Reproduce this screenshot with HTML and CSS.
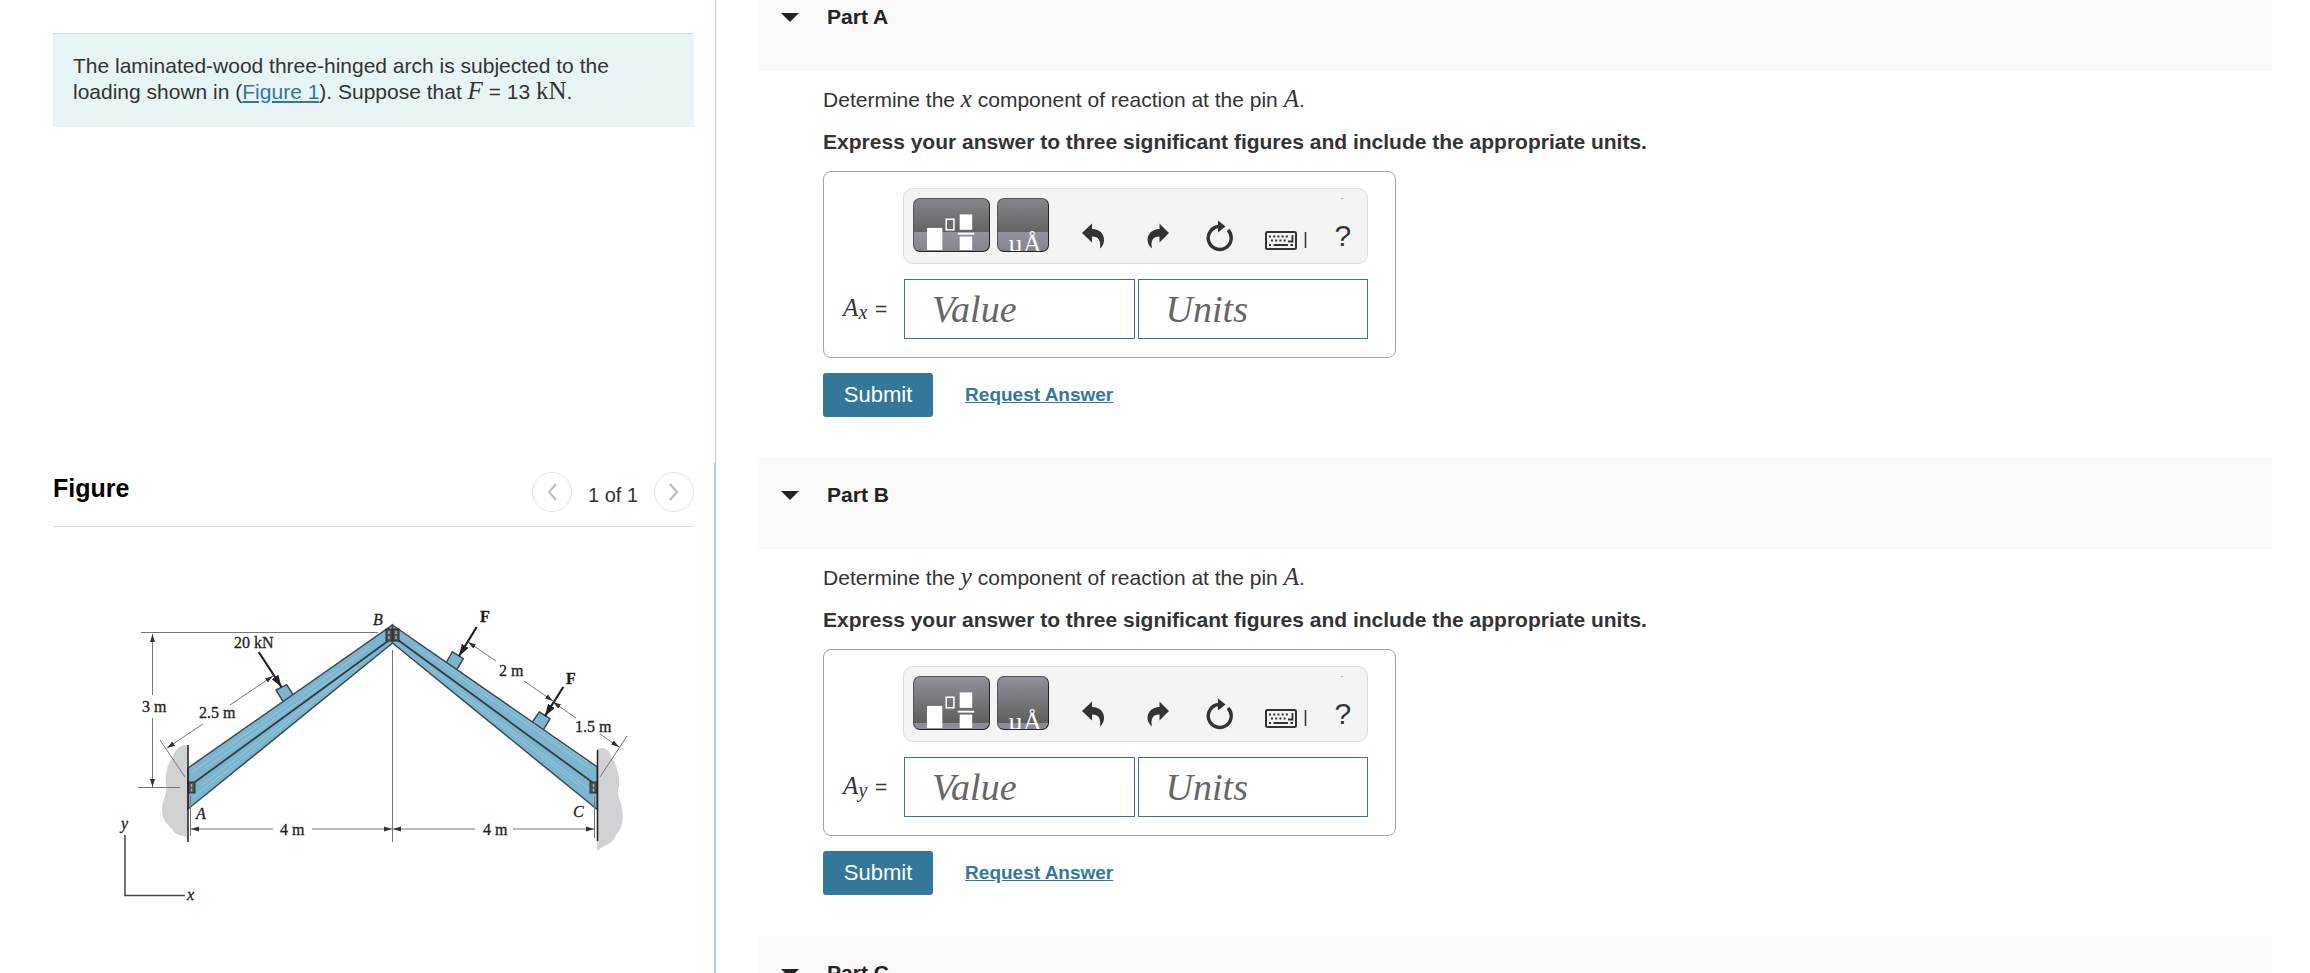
FILE: index.html
```html
<!DOCTYPE html>
<html lang="en">
<head>
    <meta charset="UTF-8">
    <meta name="viewport" content="width=device-width, initial-scale=1.0">
    <title>Three-Hinged Arch</title>
    <link rel="stylesheet" href="styles.css">
</head>
<body>
    <!-- shared toolbar icons -->
    <svg class="icon-defs" aria-hidden="true">
        <symbol id="icon-templates" viewBox="0 0 77 54">
            <g fill="#fff">
                <rect x="13" y="30" width="16" height="23"/>
                <rect x="47" y="16" width="13" height="16"/>
                <rect x="45" y="35" width="17" height="2"/>
                <rect x="47" y="39" width="13" height="14"/>
            </g>
            <rect x="33" y="21" width="8" height="11" fill="none" stroke="#fff" stroke-width="1.6"/>
        </symbol>
        <symbol id="icon-undo" viewBox="0 0 64 54">
            <path d="M22 35 L32 25.500 V31 C40 31 44 36 44 42 C44 45 43 48 40 50.500 C41 43 39 38.500 32 38.500 V44.500 Z" fill="#333"/>
        </symbol>
        <symbol id="icon-redo" viewBox="0 0 64 54">
            <path d="M45 35 L35.500 25.500 V31 C28 31 23.500 36 23.500 42 C23.500 45 25 48 28 50.500 C26.500 43 28.500 38.500 35.500 38.500 V44.500 Z" fill="#333"/>
        </symbol>
        <symbol id="icon-reset" viewBox="0 0 64 54">
            <path d="M40 32 A11.500 11.500 0 1 1 31 28.500" fill="none" stroke="#333" stroke-width="3.400"/>
            <path d="M30 22.500 L37.500 28.500 L30 34.500 Z" fill="#333"/>
        </symbol>
        <symbol id="icon-keyboard" viewBox="2 0 64 54">
            <rect x="16" y="34" width="30" height="17" rx="1.500" fill="none" stroke="#333" stroke-width="2"/>
            <path d="M19 38.500 H39 M21 42.500 H37" stroke="#333" stroke-width="2" stroke-dasharray="2 2.200"/>
            <path d="M42.500 37 V43.500 H38" fill="none" stroke="#333" stroke-width="1.800"/>
            <path d="M19 47 h2 M23.500 47 h14.500 M40.500 47 h2.500" stroke="#333" stroke-width="2"/>
            <path d="M55.500 34 V50" stroke="#333" stroke-width="1.500"/>
        </symbol>
    </svg>

    <div class="page">
        <aside class="sidebar">
            <section class="problem-pane">
                <div class="problem-text">
                    The laminated-wood three-hinged arch is subjected to the loading shown in (<a href="#figure">Figure 1</a>). Suppose that <i class="math">F</i> = 13 <span class="math">kN</span>.
                </div>
            </section>

            <section class="figure-pane" id="figure">
                <div class="figure-header">
                    <h2>Figure</h2>
                    <div class="pager">
                        <button type="button" class="pager-btn" aria-label="Previous figure">
                            <svg width="14" height="20" viewBox="0 0 14 20"><path d="M11 2 L4 10 L11 18" fill="none" stroke="#bbb" stroke-width="2"/></svg>
                        </button>
                        <span class="pager-count">1 of 1</span>
                        <button type="button" class="pager-btn" aria-label="Next figure">
                            <svg width="14" height="20" viewBox="0 0 14 20"><path d="M3 2 L10 10 L3 18" fill="none" stroke="#bbb" stroke-width="2"/></svg>
                        </button>
                    </div>
                </div>

                <svg class="diagram" viewBox="100 590 550 330" role="img" aria-label="Three-hinged arch ABC">
                    <defs>
                        <marker id="dim" viewBox="0 0 8 6" refX="8" refY="3" markerWidth="8" markerHeight="6" markerUnits="userSpaceOnUse" orient="auto-start-reverse">
                            <path d="M0 0.500 L8 3 L0 5.500 Z" fill="#333"/>
                        </marker>
                        <marker id="force" viewBox="0 0 12 8" refX="12" refY="4" markerWidth="12" markerHeight="8" markerUnits="userSpaceOnUse" orient="auto">
                            <path d="M0 0 L12 4 L0 8 Z" fill="#222"/>
                        </marker>
                    </defs>

                    <!-- walls -->
                    <path d="M188 745 C179 744 175 750 172 758 C167 765 165 774 166 785 C168 793 162 800 162 809 C162 820 167 824 172 829 C176 837 182 834 188 838 Z" fill="#d0d1d3"/>
                    <path d="M597 749 C605 746 610 751 611 757 C616 763 620 775 619 786 C616 795 621 800 622 809 C624 820 622 828 616 835 C613 845 604 844 597 851 Z" fill="#d0d1d3"/>

                    <!-- arch members -->
                    <g fill="#7db5d0" stroke="#3c4950" stroke-width="1.500">
                        <path d="M276 690 L286.700 684.700 L293.300 695 L283.300 702 Z"/>
                        <path d="M452.300 651.700 L463.300 658.700 L456.700 670 L446 663 Z"/>
                        <path d="M539.300 712 L550 718.700 L543.300 730 L532 722.500 Z"/>
                        <path d="M188 768 L392.500 625 V643 L188 809 Z"/>
                        <path d="M392.500 625 L597.300 767 V809.500 L392.500 643 Z"/>
                    </g>
                    <g stroke="#9ccbe0" stroke-width="0.800">
                        <path d="M192 772 L370 647 M205 768 L350 666 M192 798 L340 681 M202 785 L372 654"/>
                        <path d="M415 646 L590 768 M440 660 L588 762 M430 668 L590 790 M460 694 L580 786"/>
                    </g>
                    <path d="M195 782 L388 641 M398 640 L592 782" stroke="#333b40" stroke-width="1.800"/>

                    <!-- hinges -->
                    <g fill="#4c5154" stroke="#2b2f31" stroke-width="1">
                        <rect x="386" y="629" width="6" height="12"/>
                        <rect x="393" y="629" width="6" height="12"/>
                        <rect x="188" y="782" width="7" height="11"/>
                        <rect x="590" y="782" width="7" height="11"/>
                    </g>
                    <path d="M389 631 v3 M389 636 v3 M396 631 v3 M396 636 v3 M191.500 784 v3 M191.500 788.500 v3 M593.500 784 v3 M593.500 788.500 v3" stroke="#a9adb0" stroke-width="1.500"/>
                    <path d="M188 745 V842 M597.500 750 V841" stroke="#222" stroke-width="1.500"/>

                    <!-- extension lines -->
                    <g stroke="#777" stroke-width="1">
                        <path d="M141 632.500 H378 M138 787.500 H180 M160 740 L185 777 M627 736 L600 777"/>
                        <path d="M190.500 795 V836 M594.500 796 V838 M392.500 650 V842"/>
                    </g>

                    <!-- dimension lines -->
                    <g stroke="#777" stroke-width="1" fill="none">
                        <path d="M152.500 695 V634" marker-end="url(#dim)"/>
                        <path d="M152.500 718 V787" marker-end="url(#dim)"/>
                        <path d="M203 724 L167 748" marker-end="url(#dim)"/>
                        <path d="M230 705 L273 676" marker-end="url(#dim)"/>
                        <path d="M496 661 L468 642" marker-end="url(#dim)"/>
                        <path d="M524 681 L553 701" marker-end="url(#dim)"/>
                        <path d="M576 718 L553 702" marker-end="url(#dim)"/>
                        <path d="M600 734 L619 747" marker-end="url(#dim)"/>
                        <path d="M273 829 H191" marker-end="url(#dim)"/>
                        <path d="M312 829 H392" marker-end="url(#dim)"/>
                        <path d="M475 829 H393" marker-end="url(#dim)"/>
                        <path d="M513 829 H594" marker-end="url(#dim)"/>
                    </g>

                    <!-- forces -->
                    <g stroke="#222" stroke-width="2.200">
                        <path d="M258.700 652 L281.500 687" marker-end="url(#force)"/>
                        <path d="M476.700 627 L459 656" marker-end="url(#force)"/>
                        <path d="M563.300 687 L545 716" marker-end="url(#force)"/>
                    </g>

                    <path d="M125 835 V895.500 H185" fill="none" stroke="#444" stroke-width="1.500"/>

                    <g class="diagram-text">
                        <text x="142" y="712">3 m</text>
                        <text x="199" y="718">2.5 m</text>
                        <text x="234" y="648">20 kN</text>
                        <text x="280" y="835">4 m</text>
                        <text x="483" y="835">4 m</text>
                        <text x="499" y="676">2 m</text>
                        <text x="575" y="732">1.5 m</text>
                        <text x="480" y="622" font-weight="bold">F</text>
                        <text x="566" y="684" font-weight="bold">F</text>
                        <g font-style="italic">
                            <text x="196" y="819">A</text>
                            <text x="373" y="625">B</text>
                            <text x="573" y="817">C</text>
                            <text x="187" y="900">x</text>
                            <text x="121" y="829">y</text>
                        </g>
                    </g>
                </svg>
            </section>
        </aside>

        <main class="parts">
            <section class="part">
                <header class="part-header">
                    <button type="button" class="part-toggle"><span class="caret"></span>Part A</button>
                </header>
                <form class="part-body">
                    <p>Determine the <i class="math">x</i> component of reaction at the pin <i class="math">A</i>.</p>
                    <p class="instructions">Express your answer to three significant figures and include the appropriate units.</p>
                    <div class="answer-box">
                        <div class="toolbar">
                            <button type="button" class="key key-templates" aria-label="Templates"><svg><use href="#icon-templates"/></svg></button>
                            <button type="button" class="key key-symbols"><svg viewBox="0 0 50 52"><text x="10" y="53">µÅ</text></svg></button>
                            <div class="tools">
                                <button type="button" aria-label="Undo"><svg><use href="#icon-undo"/></svg></button>
                                <button type="button" aria-label="Redo"><svg><use href="#icon-redo"/></svg></button>
                                <button type="button" aria-label="Reset"><svg><use href="#icon-reset"/></svg></button>
                                <button type="button" aria-label="Keyboard shortcuts"><svg><use href="#icon-keyboard"/></svg></button>
                                <button type="button" class="help">?</button>
                            </div>
                        </div>
                        <label class="answer-label" for="value-a"><i class="math">A<sub>x</sub></i> =</label>
                        <div class="fields">
                            <input type="text" id="value-a" placeholder="Value">
                            <input type="text" placeholder="Units" aria-label="Units">
                        </div>
                    </div>
                    <div class="actions">
                        <button type="submit" class="submit">Submit</button>
                        <a href="#">Request Answer</a>
                    </div>
                </form>
            </section>

            <section class="part">
                <header class="part-header">
                    <button type="button" class="part-toggle"><span class="caret"></span>Part B</button>
                </header>
                <form class="part-body">
                    <p>Determine the <i class="math">y</i> component of reaction at the pin <i class="math">A</i>.</p>
                    <p class="instructions">Express your answer to three significant figures and include the appropriate units.</p>
                    <div class="answer-box">
                        <div class="toolbar toolbar-dark">
                            <button type="button" class="key key-templates" aria-label="Templates"><svg><use href="#icon-templates"/></svg></button>
                            <button type="button" class="key key-symbols"><svg viewBox="0 0 50 52"><text x="10" y="53">µÅ</text></svg></button>
                            <div class="tools">
                                <button type="button" aria-label="Undo"><svg><use href="#icon-undo"/></svg></button>
                                <button type="button" aria-label="Redo"><svg><use href="#icon-redo"/></svg></button>
                                <button type="button" aria-label="Reset"><svg><use href="#icon-reset"/></svg></button>
                                <button type="button" aria-label="Keyboard shortcuts"><svg><use href="#icon-keyboard"/></svg></button>
                                <button type="button" class="help">?</button>
                            </div>
                        </div>
                        <label class="answer-label" for="value-b"><i class="math">A<sub>y</sub></i> =</label>
                        <div class="fields">
                            <input type="text" id="value-b" placeholder="Value">
                            <input type="text" placeholder="Units" aria-label="Units">
                        </div>
                    </div>
                    <div class="actions">
                        <button type="submit" class="submit">Submit</button>
                        <a href="#">Request Answer</a>
                    </div>
                </form>
            </section>

            <section class="part">
                <header class="part-header">
                    <button type="button" class="part-toggle"><span class="caret"></span>Part C</button>
                </header>
            </section>
        </main>
    </div>
</body>
</html>
```
FILE: styles.css
```css
* {
    box-sizing: border-box;
    margin: 0;
    padding: 0;
}

body {
    font-family: "Helvetica Neue", Helvetica, "Liberation Sans", Arial, sans-serif;
    font-size: 21px;
    line-height: 26px;
    color: #333;
    background-color: #fff;
}

button {
    font-family: inherit;
    color: inherit;
    background: none;
    border: none;
    cursor: pointer;
}

a {
    color: #347899;
}

.icon-defs {
    display: none;
}

.page {
    display: flex;
    height: 100vh;
    overflow: hidden;
}

.math {
    font-family: "Liberation Serif", "Times New Roman", serif;
    font-size: 25px;
    line-height: 0;
}

.math sub {
    margin-right: 2px;
    font-size: 20px;
    line-height: 0;
    vertical-align: -3px;
}

/* Left column */
.sidebar {
    flex: 0 0 31%;
    min-width: 0;
    display: flex;
    flex-direction: column;
}

.problem-pane {
    min-height: 463px;
    padding: 33px 21px 0 53px;
    border-right: 1px solid #bccae0;
}

.problem-text {
    padding: 19px 60px 22px 20px;
    background-color: #e8f5f6;
    border-top: 1px solid #d6dcdc;
}

.figure-pane {
    flex: 1;
    padding: 0 20px 0 53px;
    border-right: 2px solid #bccae0;
}

.figure-header {
    display: flex;
    justify-content: space-between;
    height: 64px;
    padding-top: 9px;
    border-bottom: 1px solid #ddd;
}

.figure-header h2 {
    font-size: 25px;
    line-height: 32px;
    color: #000;
}

.pager {
    display: flex;
    align-items: flex-start;
    gap: 16px;
}

.pager-btn {
    display: flex;
    align-items: center;
    justify-content: center;
    width: 40px;
    height: 40px;
    border: 1px solid #e3e3e3;
    border-radius: 50%;
}

.pager-count {
    padding-top: 10px;
    font-size: 20px;
}

.diagram {
    display: block;
    width: 100%;
    max-width: 550px;
    margin: 63px 0 0 47px;
}

.diagram-text {
    font-family: "Liberation Serif", "Times New Roman", serif;
    font-size: 16px;
    fill: #222;
    stroke: #222;
    stroke-width: 0.3;
}

/* Right column, scrolled a little past the first header */
.parts {
    flex: 1;
    min-width: 0;
    margin: -20px 38px 0 43px;
}

.part-header {
    height: 91px;
    padding: 24px 22px;
    background-color: #f9f9f9;
}

.part-toggle {
    display: flex;
    align-items: center;
    gap: 28px;
    font-size: 21px;
    font-weight: bold;
    line-height: 26px;
    color: #222;
}

.caret {
    border: 9px solid transparent;
    border-top-color: #222;
    border-bottom: none;
}

.part-body {
    padding: 16px 0 41px 64px;
}

.part-body p {
    margin-bottom: 16px;
}

.instructions {
    font-weight: bold;
}

.answer-box {
    display: grid;
    grid-template-columns: 60px minmax(0, 1fr);
    row-gap: 15px;
    max-width: 573px;
    padding: 16px 27px 18px 19px;
    border: 1px solid #a5a5a5;
    border-radius: 8px;
}

.toolbar {
    grid-column: 2;
    display: flex;
    gap: 7px;
    height: 76px;
    padding: 9px 0 9px 9px;
    background-color: #f4f4f4;
    border: 1px solid #dcdcdc;
    border-radius: 10px;
}

.key {
    height: 54px;
    overflow: hidden;
    color: #fff;
    background: linear-gradient(#86858a, #636363 63%, #94929d 64%, #85848c);
    border: 1px solid #555;
    border-right-color: #222;
    border-bottom-color: #222;
    border-radius: 7px;
}

.toolbar-dark .key {
    background: linear-gradient(#929099, #5e5e5e 88%, #8d8b98 89%);
}

.key-templates {
    flex: 0 0 77px;
}

.key svg {
    display: block;
    width: 100%;
    height: 100%;
}

.key-symbols {
    flex: 0 0 52px;
}

.key-symbols text {
    font-family: "Liberation Serif", "Times New Roman", serif;
    font-size: 26px;
    fill: #fff;
}

.tools {
    flex: 1;
    min-width: 0;
    display: flex;
    margin-left: 4px;
}

.tools button {
    flex: 0 0 64px;
    height: 54px;
}

.tools svg {
    display: block;
    width: 64px;
    height: 54px;
}

.tools .help {
    position: relative;
    flex: 1 1 0;
    padding: 22px 16px 0 0;
    font-size: 30px;
    line-height: 32px;
    text-align: right;
}

.help::before {
    content: "";
    position: absolute;
    top: 0;
    right: 24px;
    width: 2px;
    height: 1px;
    background-color: #aaa;
}

.answer-label {
    padding-top: 17px;
    white-space: nowrap;
}

.fields {
    display: flex;
    gap: 3px;
    padding-left: 1px;
}

.fields input {
    flex: 1;
    min-width: 0;
    height: 60px;
    padding: 0 27px;
    font-family: "Liberation Serif", "Times New Roman", serif;
    font-size: 38px;
    font-style: italic;
    color: #333;
    border: 1px solid #347899;
}

.fields input::placeholder {
    color: #666;
}

.actions {
    display: flex;
    align-items: center;
    gap: 32px;
    margin-top: 15px;
}

.submit {
    width: 110px;
    height: 44px;
    font-size: 22px;
    color: #fff;
    background-color: #347899;
    border-radius: 3px;
}

.actions a {
    font-size: 19px;
    font-weight: bold;
}
```
